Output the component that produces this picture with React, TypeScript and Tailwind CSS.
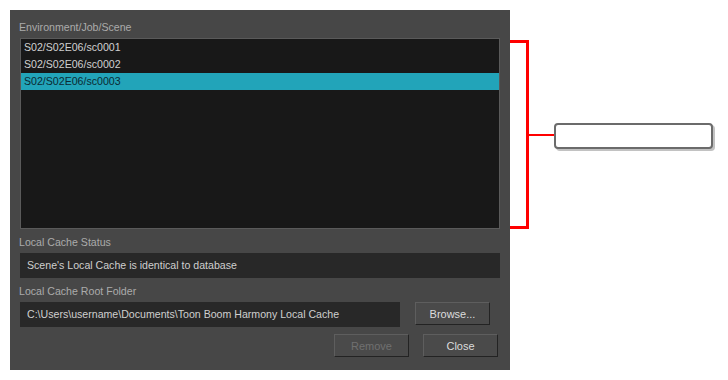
import React from 'react';

const scenes = ['S02/S02E06/sc0001', 'S02/S02E06/sc0002', 'S02/S02E06/sc0003'];

function Button({ label, disabled }: { label: string; disabled?: boolean }) {
  return (
    <button
      className={`h-[23px] w-[75px] border border-[#5e5e5e] border-b-[#232323] border-r-[#232323] bg-[#4a4a4a] pt-px text-[11px] ${
        disabled ? 'text-[#707070]' : 'text-[#dcdcdc]'
      }`}
    >
      {label}
    </button>
  );
}

export default function App() {
  const selected = 2;

  return (
    <div className="flex h-[380px] w-[728px] bg-white pl-[10px] pt-[10px] font-['Liberation_Sans',Arial,sans-serif]">
      {/* Dialog */}
      <div className="flex h-[360px] w-[500px] flex-col bg-[#474747] px-[10px] pt-[10px] text-[10.6px] leading-[13px]">
        <div className="-ml-px pt-px text-[#ababab]">Environment/Job/Scene</div>
        <ul className="mt-[4px] h-[191px] border border-[#5a5a5a] bg-[#181818]">
          {scenes.map((s, i) => (
            <li
              key={s}
              className={`flex h-[17px] items-center pl-[3px] ${
                i === selected ? 'bg-[#22a4b9] text-[#0b2a33]' : 'text-[#d0d0d0]'
              }`}
            >
              {s}
            </li>
          ))}
        </ul>

        <div className="-ml-px mt-[7px] text-[#ababab]">Local Cache Status</div>
        <div className="mt-[4px] flex h-[25px] items-center bg-[#282828] pl-[7px] text-[#cfcfcf]">
          Scene's Local Cache is identical to database
        </div>

        <div className="-ml-px mt-[7px] text-[#ababab]">Local Cache Root Folder</div>
        <div className="mt-[4px] flex items-start">
          <div className="flex h-[25px] w-[380px] items-center bg-[#282828] pl-[7px] text-[#cfcfcf]">
            C:\Users\username\Documents\Toon Boom Harmony Local Cache
          </div>
          <div className="ml-[15px]">
            <Button label="Browse..." />
          </div>
        </div>

        <div className="mt-[7px] flex justify-end gap-[14px] pr-[2px]">
          <Button label="Remove" disabled />
          <Button label="Close" />
        </div>
      </div>

      {/* Annotation */}
      <div className="mt-[30px] flex h-[189px] items-center self-start">
        <div className="h-[189px] w-[19px] border-y-[3px] border-r-[3px] border-[#ff0000]" />
        <div className="h-[2px] w-[25px] bg-[#ff0000]" />
        <div className="mt-[2px] h-[26px] w-[159px] rounded-[4px] border-2 border-[#6b6b6b] bg-white shadow-[2px_2px_0_#c2c2c2]" />
      </div>
    </div>
  );
}
